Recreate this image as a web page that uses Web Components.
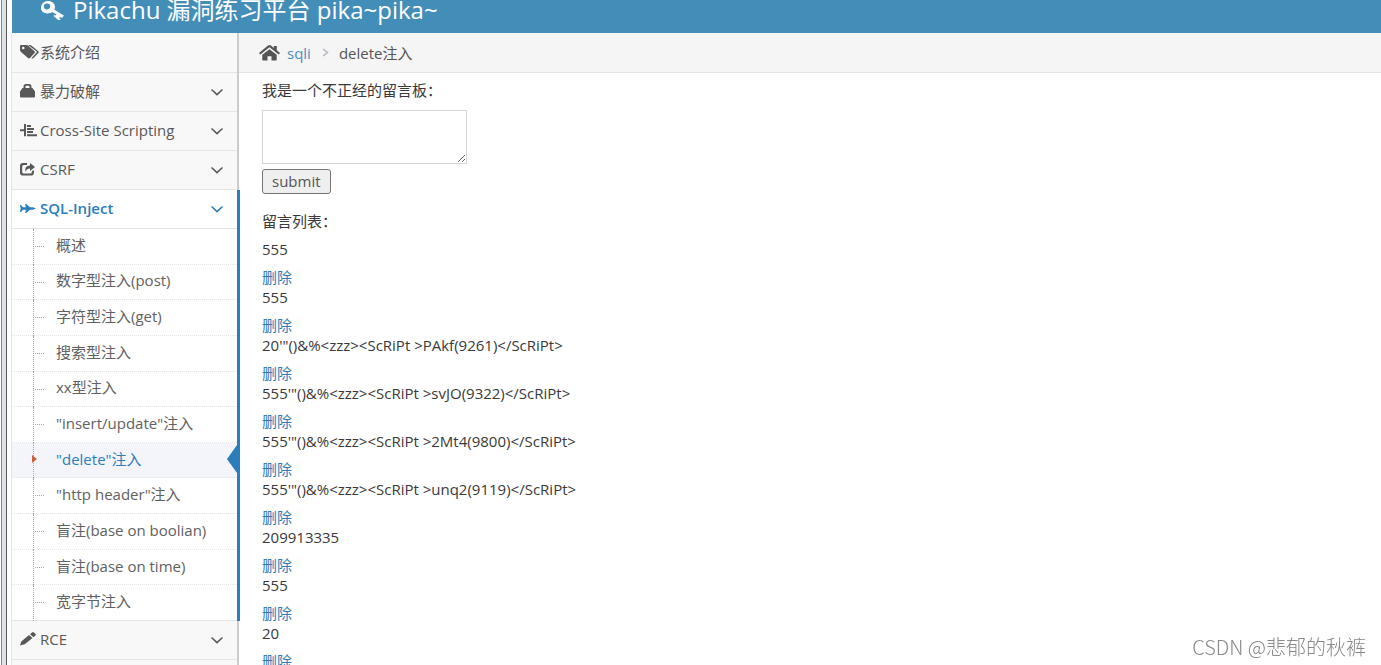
<!DOCTYPE html>
<html lang="zh-CN">
<head>
<meta charset="UTF-8">
<title>Pikachu</title>
<style>
    body {
        margin: 0;
        height: 100vh;
        overflow: hidden;
        background: #fff;
        color: #393939;
        font: 15px/20px "Open Sans", "Noto Sans CJK SC", sans-serif;
    }
</style>
</head>
<body>
<app-shell>
    <top-bar slot="header">Pikachu 漏洞练习平台 pika~pika~</top-bar>
    <side-menu slot="menu">
        <menu-item icon="tags" plain>系统介绍</menu-item>
        <menu-item icon="bag">暴力破解</menu-item>
        <menu-item icon="indent">Cross-Site Scripting</menu-item>
        <menu-item icon="share">CSRF</menu-item>
        <menu-item icon="jet" open>SQL-Inject
            <sub-item slot="sub">概述</sub-item>
            <sub-item slot="sub">数字型注入(post)</sub-item>
            <sub-item slot="sub">字符型注入(get)</sub-item>
            <sub-item slot="sub">搜索型注入</sub-item>
            <sub-item slot="sub">xx型注入</sub-item>
            <sub-item slot="sub">"insert/update"注入</sub-item>
            <sub-item slot="sub" active>"delete"注入</sub-item>
            <sub-item slot="sub">"http header"注入</sub-item>
            <sub-item slot="sub">盲注(base on boolian)</sub-item>
            <sub-item slot="sub">盲注(base on time)</sub-item>
            <sub-item slot="sub">宽字节注入</sub-item>
        </menu-item>
        <menu-item icon="pencil">RCE</menu-item>
    </side-menu>
    <bread-crumbs slot="crumbs" parent="sqli">delete注入</bread-crumbs>
    <message-board></message-board>
</app-shell>
<water-mark>CSDN @悲郁的秋裤</water-mark>

<script>
// ICONS
const icons = {
    key: ['0 0 23 19', '<path fill-rule="evenodd" d="M7 0C11 0 14 2.500 14 6c0 1-.3 1.800-.8 2.600l9.800 6.200-2.200 2.200-1.800-1-1 1 1.700 1.300-1.900 1.300-5.300-4.500 1.200-1.200 1 .6.9-.9-4.400-2.600C9.500 12 8.300 12.400 6.500 12.400 2.500 12.400 0 10 0 6.800 0 3 3 0 7 0zM6 2.500C3.800 2.500 2.800 3.800 2.800 5.500S4 8.500 5.700 8.500 9.300 7.200 9.300 5.200 8 2.500 6 2.500z"/>'],
    tags: ['0 0 19 14', '<path fill-rule="evenodd" d="M0 1.200Q0 0 1.500 0H6q1.500 0 2.500 1l6 5.300q1 .9 0 1.800l-4.500 5q-1 .9-2 0L1 7Q0 6 0 4.800zM3.200 1.700a1.300 1.300 0 1 0 .1 2.600 1.300 1.300 0 0 0-.1-2.600z"/><path d="M8 0h1.500q1.500 0 2.500 1l6.300 5.300q1 .9 0 1.800l-4.800 5q-1 .9-2 .2l5-5.700q.6-.7-.1-1.400z"/>'],
    bag: ['0 0 15 14', '<path fill-rule="evenodd" d="M3.500 4V2.500Q3.500 0 6 0h3q2.500 0 2.500 2.500V4h1L15 7.500v5q0 1-1 1H1q-1 0-1-1v-5L2.500 4zM5.500 4h4V2.500q0-.8-.8-.8H6.300q-.8 0-.8.8z"/>'],
    indent: ['0 0 17 13', '<path d="M0 5.300h4V0h2v12.300H4V7.300H0zM7 1h4v2H7zM7 4h7v2H7zM7 7h6v2H7zM7 10.300h10v2H7z"/>'],
    share: ['0 0 15 13', '<path d="M7 0v2H3.800Q2.200 2 2.200 3.500v5.400q0 1.500 1.600 1.500h6.400q1.600 0 1.600-1.500V8.200l2.100-1.200v2.700q0 2.800-2.900 2.800H3Q0 12.500 0 9.700V2.800Q0 0 3 0z"/><path d="M10 0l5 4-5 4V5.500Q6.500 5.400 5.500 9 4 2.700 10 2.500z"/>'],
    jet: ['0 0 16 9', '<path d="M0 1h1l2 2.200h3L5 0h1.200l3.700 3.200h3L16 4.500l-3.100 1.300h-3L6.200 9H5l1-3.200H3L1 8H0l.7-3.500z"/>'],
    pencil: ['0 0 16 14', '<path d="M0 13.500l1.300-4L9 3l3.500 3-7.800 6.300zM10 2.200L12 .5q1-.8 2 0L15.500 2q.8.8 0 1.500l-2 1.700z"/>'],
    home: ['0 0 21 16', '<path d="M10.500 4.200l7.200 5.600v5q0 .8-.8.8H12.500v-4.300h-4v4.300H4.100q-.8 0-.8-.8v-5z"/><path d="M0 8L9 .6q1.500-1.100 3 0l2.800 2.300V1h3v4.300L21 8l-1.300 1.500L10.500 2.300 1.300 9.500z"/>'],
    down: ['0 0 12 7', '<path d="M0 1l1-1 5 4.400L11 0l1 1-6 5.700z"/>']
};

function icon(name) {
    const [box, shape] = icons[name];
    const [, , w, h] = box.split(' ');
    return `<svg viewBox="${box}" width="${w}" height="${h}" fill="currentColor" aria-hidden="true">${shape}</svg>`;
}

// APP SHELL COMPONENT
class AppShell extends HTMLElement {
    constructor() {
        super();
        this.attachShadow({ mode: 'open' }).innerHTML = `
            <style>
                :host {
                    display: flex;
                    height: 100%;
                    box-sizing: border-box;
                    padding-left: 6px;
                    background: linear-gradient(90deg, #fff 1px, #84868a 1px, #84868a 2px, #dfe2e4 2px);
                }
                .page {
                    flex: 1;
                    display: flex;
                    flex-direction: column;
                    min-width: 0;
                    background: #fff;
                    border-left: 1px solid #55575a;
                    padding-left: 4px;
                }
                .body {
                    flex: 1;
                    display: flex;
                    min-height: 0;
                    border-left: 1px solid #e5e5e5;
                }
                .header {
                    padding-left: 1px;
                }
                main {
                    flex: 1;
                    min-width: 0;
                }
            </style>
            <div class="page">
                <div class="header"><slot name="header"></slot></div>
                <div class="body">
                    <slot name="menu"></slot>
                    <main><slot name="crumbs"></slot><slot></slot></main>
                </div>
            </div>
        `;
    }
}

customElements.define('app-shell', AppShell);

// TOP BAR COMPONENT
class TopBar extends HTMLElement {
    constructor() {
        super();
        this.attachShadow({ mode: 'open' }).innerHTML = `
            <style>
                :host {
                    display: block;
                    background: #438eb9;
                    color: #fff;
                }
                a {
                    display: flex;
                    align-items: center;
                    gap: 9px;
                    height: 20px;
                    padding: 0 0 13px 29px;
                    font-size: 24px;
                    line-height: 20px;
                    color: inherit;
                    text-decoration: none;
                }
            </style>
            <a href="#">${icon('key')}<span><slot></slot></span></a>
        `;
    }
}

customElements.define('top-bar', TopBar);

// SIDE MENU COMPONENT
class SideMenu extends HTMLElement {
    constructor() {
        super();
        this.attachShadow({ mode: 'open' }).innerHTML = `
            <style>
                :host {
                    flex: none;
                    width: 227px;
                    box-sizing: border-box;
                    padding-top: 1px;
                    border-right: 2px solid #ccc;
                    background: #f8f8f8;
                }
            </style>
            <nav><slot></slot></nav>
        `;
    }
}

customElements.define('side-menu', SideMenu);

class MenuItem extends HTMLElement {
    connectedCallback() {
        const arrow = this.hasAttribute('plain') ? '' : icon('down');
        this.attachShadow({ mode: 'open' }).innerHTML = `
            <style>
                :host {
                    display: block;
                    color: #585858;
                }
                :host([open]) {
                    position: relative;
                    margin-right: -3px;
                    border-right: 3px solid #2b7dbc;
                    background: #fff;
                }
                a {
                    display: flex;
                    align-items: center;
                    height: 38px;
                    padding: 0 14px 0 8px;
                    border-bottom: 1px solid #e5e5e5;
                    color: inherit;
                    text-decoration: none;
                }
                :host([open]) a {
                    color: #2b7dbc;
                    font-weight: 600;
                }
                .icon {
                    display: flex;
                    width: 20px;
                    flex: none;
                    padding-bottom: 2px;
                }
                .text {
                    flex: 1;
                    padding-bottom: 3px;
                    white-space: nowrap;
                }
                .sub {
                    display: grid;
                    grid-auto-rows: 1fr;
                    min-height: 392px;
                }
            </style>
            <a href="#"><span class="icon">${icon(this.getAttribute('icon'))}</span><span class="text"><slot></slot></span>${arrow}</a>
            ${this.hasAttribute('open') ? '<div class="sub"><slot name="sub"></slot></div>' : ''}
        `;
    }
}

customElements.define('menu-item', MenuItem);

class SubItem extends HTMLElement {
    constructor() {
        super();
        this.attachShadow({ mode: 'open' }).innerHTML = `
            <style>
                :host {
                    display: flex;
                    position: relative;
                    border-bottom: 1px dotted #e4e4e4;
                    color: #616161;
                }
                :host(:last-of-type) {
                    border-bottom-color: #e5e5e5;
                    border-bottom-style: solid;
                }
                :host([active]) {
                    background: #f4f5fa;
                    color: #2b7dbc;
                }
                a {
                    flex: 1;
                    display: flex;
                    align-items: center;
                    padding-bottom: 3px;
                    padding-left: 44px;
                    color: inherit;
                    text-decoration: none;
                    white-space: nowrap;
                }
                /* tree line and its branch */
                :host::before {
                    content: "";
                    position: absolute;
                    left: 21px;
                    top: 0;
                    bottom: -1px;
                    border-left: 1px dotted #7fb0d8;
                }
                .branch {
                    position: absolute;
                    left: 23px;
                    top: 17px;
                    width: 9px;
                    border-top: 1px dotted #7fb0d8;
                }
                :host([active]) .branch {
                    left: 20px;
                    top: 12px;
                    width: 0;
                    border: 4px solid transparent;
                    border-left: 5px solid #c86139;
                    border-right: 0;
                }
                :host([active])::after {
                    content: "";
                    position: absolute;
                    right: 0;
                    top: 2px;
                    border: 14px solid transparent;
                    border-left: 0;
                    border-right: 10px solid #2b7dbc;
                }
            </style>
            <span class="branch"></span><a href="#"><slot></slot></a>
        `;
    }
}

customElements.define('sub-item', SubItem);

// BREADCRUMBS COMPONENT
class BreadCrumbs extends HTMLElement {
    connectedCallback() {
        this.attachShadow({ mode: 'open' }).innerHTML = `
            <style>
                :host {
                    display: block;
                    background: #f5f5f5;
                    border-bottom: 1px solid #e5e5e5;
                    color: #555;
                }
                nav {
                    display: flex;
                    align-items: center;
                    height: 39px;
                    padding-left: 20px;
                }
                a {
                    margin-left: 7px;
                    color: #4c8fbd;
                    text-decoration: none;
                }
                .sep {
                    margin: 0 10px 0 11px;
                    color: #b2b6bf;
                }
            </style>
            <nav>${icon('home')}<a href="#">${this.getAttribute('parent')}</a><svg class="sep" width="7" height="9" viewBox="0 0 7 9" fill="none" stroke="currentColor" stroke-width="1.500"><path d="M1 1l4.500 3.500L1 8"/></svg><span><slot></slot></span></nav>
        `;
    }
}

customElements.define('bread-crumbs', BreadCrumbs);

// MESSAGE BOARD COMPONENT
const messages = [
    '555',
    '555',
    `20'"()&%<zzz><ScRiPt >PAkf(9261)<\/ScRiPt>`,
    `555'"()&%<zzz><ScRiPt >svJO(9322)<\/ScRiPt>`,
    `555'"()&%<zzz><ScRiPt >2Mt4(9800)<\/ScRiPt>`,
    `555'"()&%<zzz><ScRiPt >unq2(9119)<\/ScRiPt>`,
    '209913335',
    '555',
    '20'
];

class MessageBoard extends HTMLElement {
    constructor() {
        super();
        const shadow = this.attachShadow({ mode: 'open' });
        shadow.innerHTML = `
            <style>
                :host {
                    display: block;
                    padding: 7px 23px;
                }
                form {
                    display: flex;
                    flex-direction: column;
                    align-items: flex-start;
                }
                textarea {
                    width: 205px;
                    height: 54px;
                    box-sizing: border-box;
                    margin: 10px 0 5px;
                    border: 1px solid #d5d5d5;
                    font: inherit;
                }
                button {
                    height: 25px;
                    padding: 0 9px 2px;
                    border: 1px solid #767676;
                    border-radius: 3px;
                    background: #efefef;
                    color: #555;
                    font: inherit;
                }
                h2 {
                    margin: 17px 0 8px;
                    font: inherit;
                }
                p {
                    margin: 0 0 8px;
                }
                a {
                    display: block;
                    color: #337ab7;
                    text-decoration: none;
                }
            </style>
            <form>
                <label for="message">我是一个不正经的留言板：</label>
                <textarea id="message"></textarea>
                <button type="button">submit</button>
            </form>
            <h2>留言列表：</h2>
            <div class="list"></div>
        `;
        const list = shadow.querySelector('.list');
        messages.forEach((message) => {
            const p = document.createElement('p');
            p.textContent = message;
            const a = document.createElement('a');
            a.href = '#';
            a.textContent = '删除';
            list.append(p, a);
        });
    }
}

customElements.define('message-board', MessageBoard);

// WATERMARK COMPONENT
class WaterMark extends HTMLElement {
    constructor() {
        super();
        this.attachShadow({ mode: 'open' }).innerHTML = `
            <style>
                :host {
                    position: fixed;
                    right: 15px;
                    bottom: 6px;
                    color: #888;
                    font: 300 20px/24px "Noto Sans CJK SC", sans-serif;
                }
            </style>
            <slot></slot>
        `;
    }
}

customElements.define('water-mark', WaterMark);
</script>
</body>
</html>
